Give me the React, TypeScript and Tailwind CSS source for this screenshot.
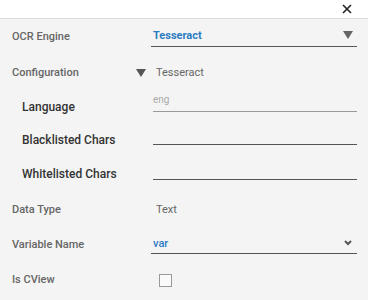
import React from "react";

const Tri = ({ cls }: { cls: string }) => (
  <svg width="10" height="8" viewBox="0 0 10 8" className={cls}>
    <polygon points="0,0 10,0 5,8" fill="currentColor" />
  </svg>
);

export default function App() {
  return (
    <div className="w-[368px] h-[300px] bg-[#f4f4f4] overflow-hidden" style={{ fontFamily: "Roboto, 'Liberation Sans', sans-serif" }}>
      <div className="h-[19px] bg-white border-b border-[#dcdcdc] flex justify-end items-center pr-[16px]">
        <svg width="10" height="10" viewBox="0 0 10 10">
          <path d="M1 1 L9 9 M9 1 L1 9" stroke="#222" strokeWidth="1.6" />
        </svg>
      </div>

      {/* OCR Engine */}
      <div className="h-[35px] flex pl-[12px]">
        <div className="w-[139px] flex items-center pt-[2px] text-[11px] font-medium text-[#666]">OCR Engine</div>
        <div className="mt-[5px] h-[23px] w-[206px] border-b border-[#555] flex items-center justify-between pt-[3px] pl-[2px] pr-[4px]">
          <span className="text-[11px] font-bold text-[#2b7cc2]">Tesseract</span>
          <Tri cls="text-[#666] -mt-[3px]" />
        </div>
      </div>

      {/* Configuration */}
      <div className="h-[38px] flex items-center pl-[12px]">
        <div className="w-[124px] text-[11px] font-medium text-[#666]">Configuration</div>
        <Tri cls="text-[#555]" />
        <span className="ml-[10px] text-[11px] text-[#666]">Tesseract</span>
      </div>

      {/* Language */}
      <div className="h-[30px] flex pl-[22px]">
        <div className="w-[131px] flex items-center text-[12px] font-medium text-[#333]">Language</div>
        <div className="mt-[2px] h-[18px] w-[204px] border-b border-[#999] text-[10px] leading-[12px] text-[#aaa]">eng</div>
      </div>

      {/* Blacklisted */}
      <div className="h-[35px] flex pl-[22px]">
        <div className="w-[131px] flex items-center text-[12px] font-medium text-[#333]">Blacklisted Chars</div>
        <div className="mt-[5px] h-[18px] w-[204px] border-b border-[#555]"></div>
      </div>

      {/* Whitelisted */}
      <div className="h-[34px] flex pl-[22px]">
        <div className="w-[131px] flex items-center text-[12px] font-medium text-[#333]">Whitelisted Chars</div>
        <div className="mt-[5px] h-[18px] w-[204px] border-b border-[#555]"></div>
      </div>

      {/* Data Type */}
      <div className="h-[37px] flex items-center pl-[12px] pt-[2px]">
        <div className="w-[144px] text-[11px] font-medium text-[#666]">Data Type</div>
        <span className="text-[11px] text-[#666]">Text</span>
      </div>

      {/* Variable Name */}
      <div className="h-[34px] flex pl-[12px]">
        <div className="w-[139px] flex items-center text-[11px] font-medium text-[#666]">Variable Name</div>
        <div className="mt-[4px] h-[22px] w-[206px] border-b border-[#555] flex items-center justify-between pt-[4px] pl-[2px] pr-[5px]">
          <span className="text-[11px] font-medium text-[#2b7cc2]">var</span>
          <svg width="8" height="6" viewBox="0 0 8 6" className="-mt-[3px]">
            <path d="M1 1 L4 4 L7 1" stroke="#555" strokeWidth="2" fill="none" />
          </svg>
        </div>
      </div>

      {/* Is CView */}
      <div className="h-[36px] flex items-center pl-[12px]">
        <div className="w-[147px] text-[11px] font-medium text-[#666]">Is CView</div>
        <div className="w-[13px] h-[13px] border-[1.5px] border-[#999] bg-[#fafafa]"></div>
      </div>
    </div>
  );
}
